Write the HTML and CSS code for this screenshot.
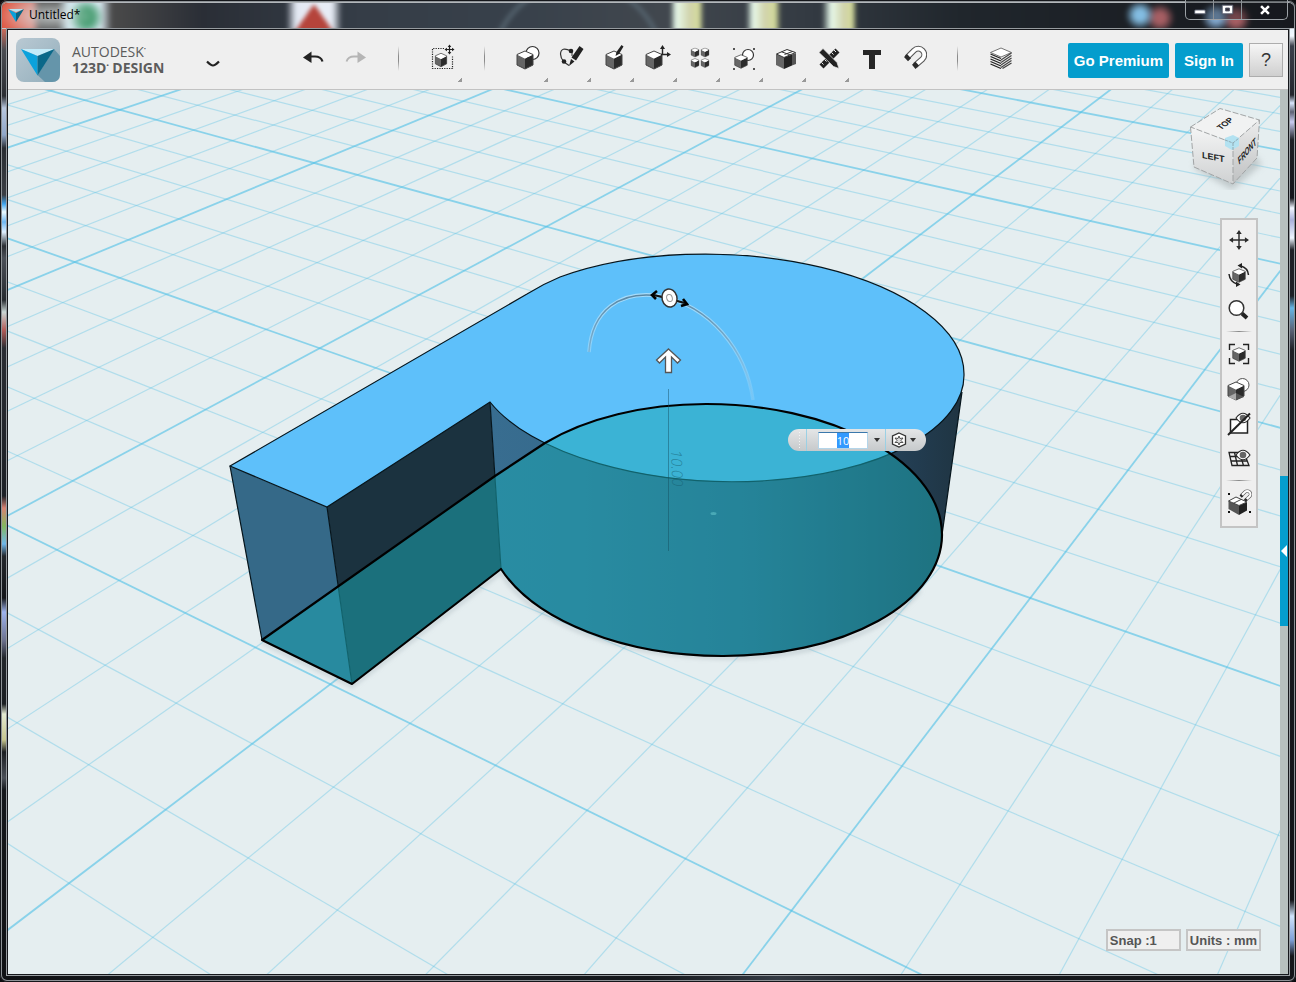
FILE: index.html
```html
<!DOCTYPE html>
<html lang="en">
<head>
<meta charset="utf-8">
<title>Untitled*</title>
<link rel="stylesheet" href="styles.css">
</head>
<body>
<svg class="defs" aria-hidden="true">
  <symbol id="cube" viewBox="0 0 18 20" preserveAspectRatio="none">
    <path d="M1 4.500 9 8.500V19L1 15Z" fill="#666"/>
    <path d="M17 4.500 9 8.500V19L17 15Z" fill="#2b2b2b"/>
    <path d="M9 1 17 4.500 9 8.500 1 4.500Z" fill="#fff"/>
    <path d="M9 1 17 4.500V15L9 19 1 15V4.500Z" fill="none" stroke="#444" stroke-width="1"/>
  </symbol>
  <symbol id="eye" viewBox="0 0 16 12">
    <path d="M1 6Q8-3.500 15 6 8 15.500 1 6Z" fill="#fff" stroke="#2b2b2b" stroke-width="1.200"/>
    <circle cx="8" cy="6" r="3.300" fill="#666"/>
  </symbol>
  <symbol id="magnet" viewBox="0 0 24 24">
    <path d="M4 12.500 11 5.500A6 6 0 0 1 19.500 14L12 20.500" fill="none" stroke="#555" stroke-width="6"/>
    <path d="M4 12.500 11 5.500A6 6 0 0 1 19.500 14L12 20.500" fill="none" stroke="#fff" stroke-width="3.800"/>
    <path d="M1 12 4 9 8 13.200 5 16.200ZM9 19.800 12.500 16.700 16 20.500 12.500 24Z" fill="#2b2b2b"/>
  </symbol>
  <symbol id="arrows4" viewBox="0 0 22 22">
    <path d="M11 2V20M2 11H20" stroke="#2b2b2b" stroke-width="1.600"/>
    <path d="M11 0 14 4.500H8ZM11 22 8 17.500H14ZM0 11 4.500 8V14ZM22 11 17.500 14V8Z" fill="#2b2b2b"/>
  </symbol>
</svg>

<div class="window">
  <header class="titlebar">
    <div class="glass" aria-hidden="true"></div>
    <svg class="appmark" viewBox="0 0 16 14" aria-hidden="true"><path d="M0 1H16L8 4Z" fill="#b9e4f2"/><path d="M0 1 8 5V14Z" fill="#0aa0da"/><path d="M16 1 8 5V14Z" fill="#0a6585"/></svg>
    <h1>Untitled*</h1>
    <div class="winctl">
      <button aria-label="Minimize"><svg viewBox="0 0 28 18"><rect x="9" y="9.500" width="11" height="4" rx="1" fill="#fff" stroke="#555b6b"/></svg></button>
      <button aria-label="Maximize"><svg viewBox="0 0 28 18"><path d="M8.500 4.500H19.500V13.500H8.500ZM12 7.500V10.500H16V7.500Z" fill="#fff" fill-rule="evenodd" stroke="#555b6b"/></svg></button>
      <button class="close" aria-label="Close"><svg viewBox="0 0 46 18"><path d="M19.500 5.500 27.500 13.500M27.500 5.500 19.500 13.500" stroke="#fff" stroke-width="2.600"/></svg></button>
    </div>
  </header>

  <div class="client">
    <nav class="toolbar">
      <div class="brand">
        <svg class="logo" viewBox="0 0 44 44" aria-hidden="true">
          <defs><linearGradient id="lg" x2="1" y2="1"><stop stop-color="#b9c9d3"/><stop offset="1" stop-color="#93aebb"/></linearGradient></defs>
          <rect width="44" height="44" rx="8" fill="url(#lg)"/>
          <path d="M38 11 44 18V36Q44 44 36 44H29L21.500 37Z" fill="#6595aa"/>
          <path d="M5 11H38.500L21.500 18Z" fill="#c3ebf9"/>
          <path d="M5 11 21.500 18V37.500Z" fill="#0ba2dc"/>
          <path d="M38.500 11 21.500 18V37.500Z" fill="#0a6889"/>
        </svg>
        <div class="wordmark"><span>AUTODESK<sup>•</sup></span><strong>123D<sup>•</sup> DESIGN</strong></div>
        <button class="menu" aria-label="Menu"><svg viewBox="0 0 16 8"><path d="M2 1.500Q6 5.500 8 5.500T14 1.500" fill="none" stroke="#222" stroke-width="2.200"/></svg></button>
      </div>
      <div class="tools">
        <button aria-label="Undo"><svg viewBox="0 0 32 32"><path d="M6 15.500 14.500 9.500V21Z" fill="#222"/><path d="M13 14.500H18Q24 14.500 25.500 19.500" fill="none" stroke="#222" stroke-width="2.200"/></svg></button>
        <button aria-label="Redo" disabled><svg viewBox="0 0 32 32"><path d="M26 15.500 17.500 9.500V21Z" fill="#b5b5b5"/><path d="M19 14.500H14Q8 14.500 6.500 19.500" fill="none" stroke="#b5b5b5" stroke-width="1.800"/></svg></button>
        <i class="sep"></i>
        <button class="more" aria-label="Transform"><svg viewBox="0 0 32 32"><path d="M18 6.500H6.500V26.500H26.500V14" fill="none" stroke="#222" stroke-width="1.200" stroke-dasharray="1.200 1.200"/><use href="#cube" x="8.500" y="10.500" width="13" height="15"/><path d="M23.500 4V11.500M19.500 7.500H27.500" stroke="#222" stroke-width="1.200"/><path d="M23.500 2.500 25.300 5H21.700ZM23.500 12.500 21.700 10H25.300ZM18.500 7.500 21 5.700V9.300ZM28.500 7.500 26 9.300V5.700Z" fill="#222"/></svg></button>
        <i class="sep"></i>
        <button class="more" aria-label="Primitives"><svg viewBox="0 0 32 32"><circle cx="20.500" cy="11" r="6.500" fill="#fff" stroke="#333" stroke-width="1.200"/><use href="#cube" x="4" y="8" width="18" height="20"/></svg></button>
        <button class="more" aria-label="Sketch"><svg viewBox="0 0 32 32"><path d="M16 9Q6 4 5.500 12 5.500 16 9 20L14 23.500" fill="none" stroke="#333" stroke-width="1.200"/><path d="M17 9.500V14" stroke="#333"/><circle cx="16" cy="9" r="2.300" fill="#222"/><circle cx="9" cy="19.500" r="2.300" fill="#222"/><path d="M24.500 4 28.500 7 21 18.500 16.500 15.500ZM16 17 19.500 19.500 14 24Z" fill="#222"/></svg></button>
        <button class="more" aria-label="Construct"><svg viewBox="0 0 32 32"><use href="#cube" x="7" y="8" width="18" height="20"/><path d="M23.500 3 25.500 4.500 21 12 17.500 14 18.500 10Z" fill="#222"/></svg></button>
        <button class="more" aria-label="Modify"><svg viewBox="0 0 32 32"><use href="#cube" x="4" y="8" width="18" height="20"/><path d="M21.500 13V6M20 12.500H27" stroke="#222" stroke-width="1.400"/><path d="M21.500 3 24 7H19ZM30 12.500 26 15V10Z" fill="#222"/></svg></button>
        <button class="more" aria-label="Pattern"><svg viewBox="0 0 32 32"><use href="#cube" x="6.500" y="5.500" width="9" height="10"/><use href="#cube" x="16.500" y="5.500" width="9" height="10"/><use href="#cube" x="6.500" y="16" width="9" height="10"/><use href="#cube" x="16.500" y="16" width="9" height="10"/></svg></button>
        <button class="more" aria-label="Grouping"><svg viewBox="0 0 32 32"><path d="M6 6H8V8H6ZM26 6H28V8H26ZM6 26H8V28H6ZM26 26H28V28H26Z" fill="#555"/><circle cx="21" cy="13" r="5.500" fill="#fff" stroke="#333" stroke-width="1.200"/><use href="#cube" x="7" y="12" width="14" height="15"/></svg></button>
        <button class="more" aria-label="Combine"><svg viewBox="0 0 32 32"><path d="M6 12 14 15.500V27L6 23Z" fill="#666"/><path d="M14 15.500 22 12.500V23.500L14 27Z" fill="#222"/><path d="M22 12.500 26 11V22L22 23.500Z" fill="#555"/><path d="M6.500 12 17 7.500 25.500 10.500 14 15.500Z" fill="#fff" stroke="#333"/><path d="M11.500 9.800 20.500 13M14.500 12.500 22.500 9.500" fill="none" stroke="#333"/></svg></button>
        <button class="more" aria-label="Measure"><svg viewBox="0 0 32 32"><path d="M22.500 6.500 26.500 10.500 10.500 26.500 6.500 22.500Z" fill="#222"/><path d="M21 8 23 10M18.500 10.500 20.500 12.500M11.500 17.500 13.500 19.500M8.500 20.500 10.500 22.500" stroke="#efefef" stroke-width="1"/><path d="M10 6.500 24 20.500 26 26.500 20.500 24.500 6 10.500Z" fill="#222" stroke="#efefef" stroke-width=".7"/></svg></button>
        <button aria-label="Text"><svg viewBox="0 0 32 32"><path d="M7 8H25V13H19V27H13V13H7Z" fill="#262626"/></svg></button>
        <button aria-label="Snap"><svg viewBox="0 0 32 32"><use href="#magnet" x="4" y="3" width="24" height="24"/></svg></button>
        <i class="sep"></i>
        <button aria-label="Material"><svg viewBox="0 0 32 32"><path d="M16 6 26.500 10.500 16 15 5.500 10.500Z" fill="#fff" stroke="#555" stroke-width=".8"/><path d="M5.500 12 16 16.500M5.500 14.500 16 19M5.500 17 16 21.500M5.500 19.500 16 24M5.500 22 16 26.500" stroke="#222" stroke-width="1.300"/><path d="M16 18 26.500 11M16 20.500 26.500 13.500M16 23 26.500 16M16 25.500 26.500 18.500M17.500 26.500 26.500 21" stroke="#444" stroke-width="1.200"/></svg></button>
      </div>
      <div class="account">
        <button class="primary">Go Premium</button>
        <button class="primary">Sign In</button>
        <button class="help" aria-label="Help">?</button>
      </div>
    </nav>

    <main class="work">
      <div class="viewport">
        <svg class="scene" viewBox="8 90 1272 884" preserveAspectRatio="xMidYMid slice" role="img" aria-label="Extruded solid on the work plane">
          <defs>
            <linearGradient id="wall" gradientUnits="userSpaceOnUse" x1="490" y1="0" x2="964" y2="0">
              <stop stop-color="#386d90"/><stop offset=".2" stop-color="#366a8c"/><stop offset=".55" stop-color="#2f5a7a"/><stop offset=".8" stop-color="#26455d"/><stop offset=".9" stop-color="#223c50"/><stop offset="1" stop-color="#1f3441"/>
            </linearGradient>
            <linearGradient id="fade" gradientUnits="userSpaceOnUse" x1="0" y1="296" x2="0" y2="400"><stop stop-color="#5a87a3"/><stop offset=".4" stop-color="#6d9dbb" stop-opacity=".8"/><stop offset="1" stop-color="#8fc4e6" stop-opacity=".2"/></linearGradient>
            <linearGradient id="halo" gradientUnits="userSpaceOnUse" x1="0" y1="296" x2="0" y2="400"><stop stop-color="#d5eefb" stop-opacity=".6"/><stop offset="1" stop-color="#d5eefb" stop-opacity=".15"/></linearGradient>
            <filter id="soft"><feGaussianBlur stdDeviation="2"/></filter>
          </defs>
          <g id="minor" class="minor"></g>
          <g id="major" class="major"></g>
          <path d="M262 642 352 686 501 572C560 672 840 692 920 590" fill="none" stroke="#9ba7b0" stroke-opacity=".4" stroke-width="4" filter="url(#soft)"/>
          <path d="M490 402 962 392 942 535A227 126 1.700 0 1 723 656A227 126 1.700 0 1 501 569Z" fill="url(#wall)"/>
          <path d="M230 466 527 294Q543 284 560 277A245 113 2 0 1 964 374A245 113 2 0 1 490 402L327 507Z" fill="#5ec0fa"/>
          <path d="M230 466 327 507 352 684 262 640Z" fill="#356988"/>
          <path d="M327 507 490 402 501 569 352 684Z" fill="#1b323f"/>
          <g fill="none" stroke="#06151c" stroke-width="1.200">
            <path d="M230 466 527 294Q543 284 560 277A245 113 2 0 1 964 374A245 113 2 0 1 490 402L327 507Z"/>
            <path d="M230 466 262 640M327 507 352 684M490 402 501 569M962 392 942 535"/>
          </g>
          <path d="M262 640 495 476 545 443A227 126 1.700 0 1 706 404A227 126 1.700 0 1 942 535A227 126 1.700 0 1 723 656A227 126 1.700 0 1 501 569L352 684Z" fill="#1da9b4" fill-opacity=".53"/>
          <path d="M262 640 495 476 545 443A227 126 1.700 0 1 706 404A227 126 1.700 0 1 942 535A227 126 1.700 0 1 723 656A227 126 1.700 0 1 501 569L352 684Z" fill="none" stroke="#000" stroke-width="2.200" stroke-linejoin="round"/>
          <path d="M668.500 389V551" stroke="#134b5d" stroke-opacity=".45"/>
          <text class="dim" transform="translate(671 450) rotate(88)">10.00</text>
          <ellipse cx="713.500" cy="513.500" rx="3" ry="1.500" fill="#49a9b6"/>
          <path d="M589 352C592 310 620 290 660 296C710 306 746 350 753 400" fill="none" stroke="url(#halo)" stroke-width="3.600"/>
          <path d="M589 352C592 310 620 290 660 296C710 306 746 350 753 400" fill="none" stroke="url(#fade)" stroke-width="1.500"/>
          <path d="M654 295 685 303" stroke="#111" stroke-width="2"/>
          <path d="M657 291 652 295 656 299M683 299 687 304 681 306" fill="none" stroke="#000" stroke-width="2.600"/>
          <ellipse cx="669.500" cy="298" rx="7.500" ry="9" transform="rotate(-15 669.500 298)" fill="#fff" stroke="#333" stroke-width="1.500"/>
          <ellipse cx="669.500" cy="298" rx="2.800" ry="3.600" transform="rotate(-15 669.500 298)" fill="none" stroke="#999"/>
          <path d="M668.500 349 680.500 360 677.500 363 671.500 357V372.500H665.500V357L659.500 363 656.500 360Z" fill="#fff" stroke="#555" stroke-width="1.300"/>
        </svg>

        <form class="valuebar">
          <span class="grip"></span>
          <input id="distance" type="text" value="10" aria-label="Distance" autofocus>
          <button type="button" aria-label="Distance options"><svg viewBox="0 0 8 6"><path d="M1 1H7L4 5Z" fill="#333"/></svg></button>
          <button type="button" class="mode" aria-label="Operation"><svg class="hex" viewBox="0 0 16 16"><path d="M8 1 14.500 4V12L8 15 1.500 12V4Z" fill="#fff" stroke="#333" stroke-width="1.300"/><path d="M8 4 9 6.500 12 6 10 8.500 12 10.500 9 10.500 8 13 7 10.500 4 10.500 6 8.500 4 6 7 6.500Z" fill="#ddd" stroke="#444" stroke-width=".9"/></svg><svg viewBox="0 0 8 6"><path d="M1 1H7L4 5Z" fill="#333"/></svg></button>
        </form>

        <svg class="viewcube" viewBox="0 0 90 90" role="img" aria-label="View cube">
          <defs>
            <linearGradient id="cf" x2="0" y2="1"><stop stop-color="#f4f5f5"/><stop offset="1" stop-color="#cfd1d2"/></linearGradient>
            <linearGradient id="cr" x2="0" y2="1"><stop stop-color="#ececec"/><stop offset="1" stop-color="#bfc1c2"/></linearGradient>
            <filter id="cs"><feGaussianBlur stdDeviation="3"/></filter>
          </defs>
          <path d="M14 68 52 90 82 64 70 50 20 50Z" fill="#a8b0b2" opacity=".6" filter="url(#cs)"/>
          <path d="M10.500 27 53 43V84L14 67Z" fill="url(#cf)"/>
          <path d="M53 43 79.500 20 77 58 53 84Z" fill="url(#cr)"/>
          <path d="M10.500 27 40 8.500 79.500 20 53 43Z" fill="#f1f2f2"/>
          <path d="M10.500 27 40 8.500 79.500 20 53 43ZM53 43V84M10.500 27 14 67 53 84 77 58 79.500 20" fill="none" stroke="#a2a5a6" stroke-dasharray="6 2"/>
          <path d="M45 38 53 35 59 38V46L52 50 45 46Z" fill="#b3e2f1"/>
          <path d="M45 40 53 43 59 38M53 43V50" fill="none" stroke="#8fa9b2" stroke-dasharray="3 1"/>
          <text class="face" transform="translate(22 58) skewY(11)">LEFT</text>
          <text class="face small" transform="translate(59 65) rotate(-50) skewX(-38)">FRONT</text>
          <text class="face small" transform="translate(41 30) rotate(-36) skewX(20)">TOP</text>
        </svg>

        <nav class="palette">
          <button aria-label="Pan"><svg viewBox="0 0 32 32"><use href="#arrows4" x="6" y="6" width="20" height="20"/></svg></button>
          <button aria-label="Orbit"><svg viewBox="0 0 32 32"><use href="#cube" x="9" y="9" width="14" height="15"/><path d="M18 7Q25 9 25.500 16M14 25Q7 23 6 15" fill="none" stroke="#222" stroke-width="1.500"/><path d="M14.500 6.500 19 4V9.500ZM17.500 25.500 13 28V22.500Z" fill="#222"/></svg></button>
          <button aria-label="Zoom"><svg viewBox="0 0 32 32"><circle cx="13.500" cy="14" r="7.300" fill="#fff" stroke="#333" stroke-width="1.500"/><path d="M19 19.500 24 24" stroke="#222" stroke-width="4"/></svg></button>
          <hr>
          <button aria-label="Fit"><svg viewBox="0 0 32 32"><path d="M6.500 12V6.500H12M20 6.500H25.500V12M25.500 20V25.500H20M12 25.500H6.500V20" fill="none" stroke="#222" stroke-width="1.400"/><use href="#cube" x="9" y="9" width="14" height="15"/></svg></button>
          <button aria-label="Display style"><svg viewBox="0 0 32 32"><circle cx="19.500" cy="12" r="6.500" fill="#fff" stroke="#555"/><use href="#cube" x="4" y="8" width="18" height="20"/><path d="M5 24 13 20 13 27Z" fill="#aaa"/><path d="M13 20 21 24 13 27Z" fill="#555"/></svg></button>
          <button aria-label="Toggle sketches"><svg viewBox="0 0 32 32"><path d="M7.500 11.500H24.500V25H7.500Z" fill="#fff" stroke="#222" stroke-width="1.500"/><use href="#eye" x="12" y="4" width="16" height="12"/><path d="M5 27 27 5.500" stroke="#222" stroke-width="2"/></svg></button>
          <button aria-label="Toggle grid"><svg viewBox="0 0 32 32"><path d="M6 9.500H21L26 22.500H9ZM7 13.500H23M8 18H24.500M11.500 9.500 14.500 22.500M16.500 9.500 20.500 22.500" fill="none" stroke="#222" stroke-width="1.300"/><use href="#eye" x="12" y="6" width="16" height="12"/></svg></button>
          <hr>
          <button aria-label="Snap settings"><svg viewBox="0 0 32 32"><path d="M5 6H7V8H5ZM5 24H7V26H5ZM26 24H28V26H26Z" fill="#111"/><path d="M5.500 14 16 18.500V28L5.500 22Z" fill="#555"/><path d="M16 18.500 24 15V23.500L16 28Z" fill="#222"/><path d="M5.500 14 13 10 24 15 16 18.500ZM10 16.500 18 12.500" fill="#fff" stroke="#444"/><use href="#magnet" x="16" y="2" width="13" height="13"/></svg></button>
        </nav>

        <div class="status">
          <button>Snap :1</button>
          <button>Units : mm</button>
        </div>
      </div>
      <aside class="edge"><button aria-label="Open panel"><svg viewBox="0 0 8 14"><path d="M7 1V13L1 7Z" fill="#fff"/></svg></button></aside>
    </main>
  </div>
</div>
<script src="grid.js"></script>
</body>
</html>
```
FILE: styles.css
```css
* { box-sizing: border-box; }
body { margin: 0; background: #0c0d10; font-family: "Liberation Sans", Arial, sans-serif; }
button { margin: 0; padding: 0; border: 0; background: none; font: inherit; color: inherit; }
svg { display: block; }
.defs { position: absolute; width: 0; height: 0; }

.window {
  display: flex;
  flex-direction: column;
  min-height: 100vh;
  padding: 0 8px 8px;
  border-radius: 7px;
  box-shadow: inset 0 0 0 1px #15171b, inset 0 0 0 2px #8d9296;
  background:
    linear-gradient(180deg, #f0542d 0, #c86a5a 30px, #4b4d52 50px, #2b2e33 96px, #b7c7de 108px, #8fa6c8 135px, #2a2e33 148px, #3a3e44 195px, #3fa5ee 204px, #eefcff 212px, #6fb8f2 222px, #dff0ff 232px, #2b2e33 246px, #4b5058 258px, #262a2f 300px, #c9d6d4 312px, #b45c58 330px, #2a2d33 348px, #1c2026 496px, #d98273 508px, #83b95f 526px, #6fb6ea 544px, #23272c 556px, #14161a 598px, #9db3ee 612px, #6d7390 640px, #22262b 658px, #1b1e22 704px, #e3ead2 714px, #c5c58e 740px, #1b1e22 752px, #4b5058 778px, #14171b 790px, #0f1114 100%) left / 8px 100% no-repeat,
    linear-gradient(180deg, #0c0d10 0, #dbeefb 16px, #f3f9ff 36px, #3b404b 46px, #23262d 95px, #dbe8ff 103px, #5d6273 112px, #c9cdf2 122px, #1d2026 140px, #14161c 198px, #f2f6ff 208px, #a9b0da 220px, #eef6ff 238px, #1d2026 250px, #1d2026 296px, #66b6e6 308px, #5a6377 330px, #1d2026 350px, #121317 900px, #cfe4fb 916px, #7ea0d8 940px, #14161a 956px) right / 8px 100% no-repeat,
    linear-gradient(90deg, #0e0f12, #1c2127 20%, #14171b 50%, #343b44 60%, #15181c 72%, #14161a) bottom / 100% 8px no-repeat,
    #15171b;
}

.titlebar { position: relative; display: flex; height: 30px; align-items: flex-start; }
.glass {
  position: absolute;
  inset: 2px -6px 1px;
  overflow: hidden;
  border-bottom: 1px solid #c3c7ca;
  border-top: 1px solid #b3b7bb;
  border-radius: 6px 6px 0 0;
  background: #2a2e36;
}
.glass::before {
  content: "";
  position: absolute;
  inset: -4px;
  padding: 4px;
  background-clip: border-box;
  background-origin: content-box;
  filter: blur(2px);
  background:
    radial-gradient(ellipse 56px 18px at 54px 17px, rgba(225,232,232,.75), transparent),
    radial-gradient(circle 18px at 88px 18px, #2b8f5c 40%, transparent),
    linear-gradient(90deg, #e2533c, #d98b83 34px, transparent 42px),
    linear-gradient(90deg, transparent 60px, #cfe6ee 70px, #dcecf4 102px, transparent 114px),
    conic-gradient(from 145deg at 316px 5px, #b5443b 70deg, transparent 70deg),
    linear-gradient(90deg, transparent 288px, #e4e9f4 298px, #e8edf6 334px, transparent 344px),
    linear-gradient(90deg, transparent 672px, #e8faec 678px, #d0d2ab 692px, #d5dc9c 701px, transparent 706px, transparent 748px, #e8faec 755px, #d0d2ab 767px, #d5dc9c 777px, transparent 783px, transparent 824px, #e8faec 833px, #d0d2ab 846px, #d5dc9c 854px, transparent 859px),
    radial-gradient(circle 15px at 1142px 16px, #83bde2 35%, transparent),
    radial-gradient(circle 15px at 1162px 19px, #a65e63 35%, transparent),
    radial-gradient(circle 15px at 1218px 18px, #83a9cf 35%, transparent),
    radial-gradient(circle 15px at 1238px 20px, #a65e63 35%, transparent),
    radial-gradient(circle 90px at 580px 70px, transparent 82px, #566570 86px, transparent 90px),
    linear-gradient(90deg, #555 0, #4a4a4a 114px, #2a2e36 204px, #353d47 364px, #38414b 524px, #41474e 664px, #343b43 804px, #20262c 964px, #17191e);
}
.appmark { position: relative; width: 16px; height: 14px; margin-top: 8px; }
.titlebar h1 {
  position: relative;
  flex: 1;
  margin: 6px 0 0 5px;
  font: 400 12px/18px "Open Sans", "Noto Sans", sans-serif;
  color: #000;
}
.winctl { position: relative; display: flex; border: 1px solid #9ca1a6; border-top: 0; border-radius: 0 0 5px 5px; background: rgba(20,22,28,.35); }
.winctl button + button { border-left: 1px solid #8b9095; }
.winctl svg { width: 27px; height: 19px; }
.winctl .close svg { width: 45px; }

.client { position: relative; flex: 1; display: flex; flex-direction: column; background: #efefef; box-shadow: 0 0 0 1px #15171b, 0 0 0 2px #969b9f; }
.toolbar { display: flex; height: 60px; border-bottom: 1px solid #c2c2c2; background: #efefef; align-items: stretch; }
.brand { display: flex; width: 283px; padding: 8px 0 0 8px; align-items: flex-start; }
.logo { width: 44px; height: 44px; }
.wordmark { display: flex; flex-direction: column; width: 120px; margin: 6px 0 0 12px; font-family: "Open Sans", "Noto Sans", sans-serif; color: #5c5c5c; }
.wordmark span { font-size: 14px; font-weight: 400; line-height: 16px; }
.wordmark strong { font-size: 14px; font-weight: 700; line-height: 16px; }
.wordmark sup { font-size: 6px; line-height: 0; }
.menu { margin: 22px 0 0 13px; }
.menu svg { width: 16px; height: 8px; }
.tools { display: flex; }
.tools button { position: relative; width: 43px; padding-bottom: 4px; }
.tools svg { width: 32px; height: 32px; margin: 0 auto; }
.more::after {
  content: "";
  position: absolute;
  right: 1px;
  bottom: 7px;
  width: 4px;
  height: 4px;
  background: linear-gradient(135deg, transparent 50%, #999 50%);
}
.sep { width: 43px; background: linear-gradient(transparent, #8b8b8b 40%, #8b8b8b 60%, transparent) center 16px / 1px 25px no-repeat; }
.account { display: flex; gap: 6px; margin-left: auto; padding: 13px 5px 0 0; align-items: flex-start; }
.primary { height: 35px; padding: 0 6px; border-radius: 2px; background: #049dcd; color: #fff; font-weight: 700; font-size: 15px; }
.primary + .primary { padding: 0 9px; }
.help { width: 34px; height: 34px; border: 1px solid #adadad; background: linear-gradient(#f6f6f6, #cfcfcf); font-size: 18px; color: #333; }

.work { flex: 1; display: flex; }
.viewport { position: relative; flex: 1; overflow: hidden; background: #e5eef0; }
.scene { position: absolute; inset: 0; width: 100%; height: 100%; }
.minor { fill: none; stroke: #5cc3e4; stroke-opacity: .38; stroke-width: 1.2; }
.major { fill: none; stroke: #4cc0e6; stroke-opacity: .6; stroke-width: 1.8; }
.dim { font: italic 300 15px "Open Sans", sans-serif; fill: #155c6e; fill-opacity: .55; }
.face { font: 700 9px "Liberation Sans", sans-serif; fill: #222; }
.small { font-size: 8px; }

.edge { display: flex; flex-direction: column; width: 8px; background: #b7c0be; }
.edge button { display: flex; height: 150px; margin-top: 386px; background: #049dcd; align-items: center; }
.edge svg { width: 8px; height: 14px; }

.valuebar {
  position: absolute;
  left: 780px;
  top: 339px;
  display: flex;
  width: 138px;
  height: 22px;
  align-items: center;
  border-radius: 11px;
  background: linear-gradient(#e4e6e7, #c6c9cb);
}
.grip { width: 19px; height: 22px; padding: 2px 4px 2px 10px; border-right: 1px solid #9bd0e4; background: radial-gradient(circle, #f4f5f5 1px, transparent 1px) 0 0 / 3px 3px content-box; }
.valuebar input { width: 50px; height: 17px; margin-left: 11px; padding: 0; border: 1px solid #b3d5ea; border-top-color: #3b78ac; background: #fff; font: 11px/14px "Open Sans", "Noto Sans", sans-serif; text-align: center; outline: 0; }
.valuebar input::selection { background: #3399ff; color: #fff; }
.valuebar button { display: flex; width: 17px; height: 22px; align-items: center; justify-content: center; gap: 2px; }
.valuebar button svg { width: 8px; height: 6px; }
.valuebar .mode { width: 37px; border-left: 1px solid #9bd0e4; }
.valuebar .mode .hex { width: 16px; height: 16px; }

.viewcube { position: absolute; top: 10px; right: 10px; width: 90px; height: 90px; }
.palette { position: absolute; top: 128px; right: 22px; display: flex; flex-direction: column; width: 38px; padding: 2px 0 6px; border: 2px solid #c4c4c4; background: #efefef; }
.palette button { height: 35px; }
.palette svg { width: 32px; height: 32px; margin: 0 auto; }
.palette hr { width: 26px; height: 1px; margin: 4px auto; border: 0; background: linear-gradient(90deg, transparent, #888, transparent); }
.status { position: absolute; right: 19px; bottom: 23px; display: flex; gap: 5px; }
.status button { min-width: 75px; height: 22px; padding: 0 2px; border: 2px solid #c5c5c5; background: #efefef; font-size: 13px; font-weight: 700; color: #555; text-align: left; }
```
FILE: grid.js
```js
// Perspective map from work-plane units to scene coordinates.
function project(u, v) {
  const w = 1 - 0.2685 * u - 0.1349 * v;
  return [(314 + 550 * u - 249.3 * v) / w, (163 + 130.1 * u + 63.7 * v) / w];
}
function line(group, a, b) {
  const el = document.createElementNS("http://www.w3.org/2000/svg", "line");
  const [x1, y1] = project(...a);
  const [x2, y2] = project(...b);
  el.setAttribute("x1", x1.toFixed(1));
  el.setAttribute("y1", y1.toFixed(1));
  el.setAttribute("x2", x2.toFixed(1));
  el.setAttribute("y2", y2.toFixed(1));
  group.appendChild(el);
}
const minor = document.getElementById("minor");
const major = document.getElementById("major");
for (let i = -30; i <= 40; i++) {
  const u = i / 15;
  line(i % 5 ? minor : major, [u, -8], [u, (0.9 - 0.2685 * u) / 0.1349]);
}
for (let j = -25; j <= 25; j++) {
  const v = j / 5;
  line(j % 5 ? minor : major, [-3, v], [(0.9 - 0.1349 * v) / 0.2685, v]);
}
document.getElementById("distance").select();
```
